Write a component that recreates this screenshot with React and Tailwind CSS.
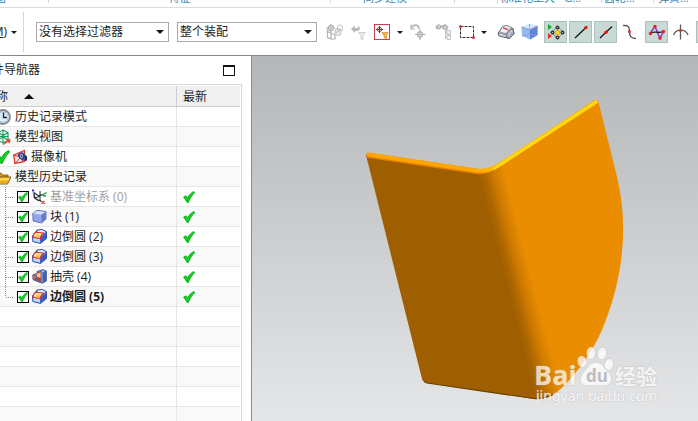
import clsx from 'clsx';

const FONT = 'font-["Open_Sans","Noto_Sans_CJK_SC",sans-serif]';

const RIBBON_GROUPS = [
  { label: '视图', className: 'w-[49px] border-r pr-[42px] justify-end' },
  { label: '特征', className: 'w-[282px] border-r pr-5 justify-center' },
  { label: '同步建模', className: 'w-[124px] border-r pl-8' },
  { label: '', className: 'w-[43px] border-r' },
  { label: '标准化工具 - G...', className: 'w-[104px] border-r pl-[2px]' },
  { label: '齿轮...', className: 'w-[52px] border-r pl-[2px]' },
  { label: '弹簧...', className: 'flex-1 pl-1' },
];

const TREE_ROWS = [
  { label: '历史记录模式', icon: ClockIcon, kind: 'root' },
  { label: '模型视图', icon: ViewsIcon, kind: 'root' },
  { label: '摄像机', icon: CameraIcon, kind: 'camera' },
  { label: '模型历史记录', icon: FolderIcon, kind: 'root' },
  { label: '基准坐标系 (0)', icon: CsysIcon, kind: 'feature', textClass: 'text-[#a0a0a0]' },
  { label: '块 (1)', icon: BlockIcon, kind: 'feature' },
  { label: '边倒圆 (2)', icon: BlendIcon, kind: 'feature' },
  { label: '边倒圆 (3)', icon: BlendIcon, kind: 'feature' },
  { label: '抽壳 (4)', icon: ShellIcon, kind: 'feature' },
  { label: '边倒圆 (5)', icon: BlendIcon, kind: 'feature', textClass: 'font-bold', last: true },
];

const EMPTY_ROWS = [0, 1, 2, 3, 4, 5];

/* ---------- tree icons ---------- */

function CheckMark({ className }) {
  return (
    <svg viewBox="0 0 12 12" className={className} aria-hidden="true">
      <path d="M.5 6.200 2.700 4.700l1.900 2C6 4.200 8 1.800 10.800.5l.9 1.300C8.900 4.300 6.800 7.700 5.500 11.400H4C3.100 9.400 2 7.800.5 6.200Z" fill="#14cc1e" stroke="#0ba81b" strokeWidth=".8" />
    </svg>
  );
}

function ClockIcon() {
  return (
    <svg viewBox="0 0 16 16" className="size-4 shrink-0" aria-hidden="true">
      <circle cx="8" cy="8" r="7" fill="#d3e4f0" stroke="#858b92" strokeWidth="1.800" />
      <circle cx="8" cy="8" r="5.200" fill="#dcecf8" stroke="#aab8c4" strokeWidth=".8" />
      <path d="M8.500 3.500V8.500H12" fill="none" stroke="#1d2630" strokeWidth="1.300" />
    </svg>
  );
}

function ViewsIcon() {
  return (
    <svg viewBox="0 0 16 16" className="size-4 shrink-0" aria-hidden="true">
      <path d="M8 1 13 3.500v8l-5 2.500-5-2.500V3.500ZM3 3.500l5 3 5-3M8 1v13M3 11.500l5-4 5 4M3 7.500h10" fill="none" stroke="#12a05a" strokeWidth="1.100" />
      <path d="M8 15.500 14.500 11M15 10.500l-3.500.5M15 10.500l-1 3.500" fill="none" stroke="#f04a28" strokeWidth="1.500" />
    </svg>
  );
}

function CameraIcon() {
  return (
    <svg viewBox="0 0 16 16" className="size-4 shrink-0" aria-hidden="true">
      <path d="M.7 6 11.500 1.500V12.500L2 14.500Z" fill="#fbe9e4" stroke="#d8362a" strokeWidth="1.300" />
      <path d="M.7 6 7 8M2 14.500 7 9" stroke="#d8362a" strokeWidth="1" />
      <path d="m4.500 5 5-2 4 4v4l-4 1-4-4Z" fill="#4650a0" />
      <circle cx="8.500" cy="7" r="2.400" fill="#d4dcf4" stroke="#1c2250" />
      <circle cx="8.500" cy="7" r="1" fill="#232a60" />
      <path d="m12 6 2 1.500v4L12 12" fill="#222a50" />
    </svg>
  );
}

function FolderIcon() {
  return (
    <svg viewBox="0 0 16 16" className="size-4 shrink-0" aria-hidden="true">
      <path d="M1 4h5l1.500 2H13v8H1Z" fill="#d99a18" stroke="#7a5004" strokeWidth=".8" />
      <path d="M5 8h11L12.500 15H1.500Z" fill="#ffd84a" stroke="#6f4a04" strokeWidth=".9" />
      <path d="M3 14.500h9.300L14 11.500H6Z" fill="#eda41e" />
    </svg>
  );
}

function CsysIcon() {
  return (
    <svg viewBox="0 0 15 15" className="size-[15px] shrink-0" aria-hidden="true">
      <path d="M2 3.500 3 9.500 9.500 12.500M3 9.500 10 5.500M2 3.500 8 8M8 2v10.500M2 3.500V8L6 11.500H9" fill="none" stroke="#30343a" strokeWidth="1.100" />
      <path d="M1 0v3.500M0 1.500h2.200" stroke="#2030e0" strokeWidth="1" />
      <path d="M9.500 6.500 14.500 3.500M11 6.500l3 .5" stroke="#159a3c" strokeWidth="1.300" />
      <path d="m9 12 4 3M12.500 12 9.500 14.500" stroke="#d02a2a" strokeWidth="1.100" />
    </svg>
  );
}

function BlockIcon() {
  return (
    <svg viewBox="0 0 15 15" className="size-[15px] shrink-0" aria-hidden="true">
      <path d="M.7 4.500 5 1.300 14 2.500V10L9.500 14 1.200 12Z" fill="#92a6ee" stroke="#5566b8" strokeWidth=".9" />
      <path d="M1 4.600 5.200 1.700 13.500 2.900 9.500 5.800Z" fill="#d3dcfc" />
      <path d="M9.500 5.800 13.600 3v6.800L9.500 13.500Z" fill="#6478cc" />
    </svg>
  );
}

function BlendIcon() {
  return (
    <svg viewBox="0 0 15 15" className="size-[15px] shrink-0" aria-hidden="true">
      <path d="M.5 7 5 1 10 .5 14.500 2.500V9.500L8.500 14.500.8 12.500Z" fill="#4d7de0" stroke="#2c3f9c" strokeWidth=".9" />
      <path d="M1.200 8.500 8 9.800V13.800L1.200 12Z" fill="#b4dcff" />
      <path d="M8.500 9 14 4.500v5L8.500 14Z" fill="#3659c2" />
      <path d="M6 1.500 10 1.100 13.600 2.700 12 4 5 3Z" fill="#e4eeff" />
      <path d="M1 8.400C1.200 5.700 2.500 3.700 4.500 3.200L12.200 4.300C9.700 5.200 8.600 6.800 8.300 9.700Z" fill="#ffc268" stroke="#e0301e" strokeWidth="1.100" />
      <path d="M2.500 7.200C3 5.800 4 4.800 5 4.600L9 5.200" fill="none" stroke="#fff3b8" strokeWidth="1.300" />
    </svg>
  );
}

function ShellIcon() {
  return (
    <svg viewBox="0 0 15 15" className="size-[15px] shrink-0" aria-hidden="true">
      <path d="M5 2.500 11 .7 14.300 2v10L10 14.300 8 13Z" fill="#8cb4f4" stroke="#2d438f" strokeWidth=".9" />
      <path d="M10.500 3.500 14 2v9.800l-3.500 2Z" fill="#3c62b8" />
      <path d="M.8 6 9 2.500V13.500L1 10.500Z" fill="#e8763a" stroke="#5a4668" strokeWidth=".9" />
      <path d="M5 4.800 8.500 3.500V8.500L5 8Z" fill="#ffc890" />
      <path d="m1.500 10 3-2L8.500 9v4Z" fill="#b8441c" />
      <path d="M.8 6 4.500 7v3.500M1 10.500 9 13.800" fill="none" stroke="#4668b8" strokeWidth="1.200" />
    </svg>
  );
}

/* ---------- toolbar icons ---------- */

function Caret({ className }) {
  return (
    <svg viewBox="0 0 8 4" className={className} aria-hidden="true">
      <path d="M0 0H8L4 4Z" fill="#1a1a1a" />
    </svg>
  );
}

function ToolSvg({ children }) {
  return (
    <svg viewBox="0 0 24 24" className="size-6 shrink-0" fill="none" aria-hidden="true">
      {children}
    </svg>
  );
}

function AssemblyFilterIcon() {
  return (
    <ToolSvg>
      <g stroke="#b4b4b4" strokeWidth="1.200">
        <path d="M5.500 9v8.500l3.500 1.500V13L5.500 11.500M9 14h4v5H9M4 8h9M9 4v9" />
        <circle cx="9" cy="8" r="2.600" />
        <ellipse cx="16" cy="12" rx="3" ry="3.500" fill="#e9e9e9" stroke="#cacaca" />
        <ellipse cx="18" cy="8" rx="2.500" ry="3" stroke="#cacaca" />
        <path d="m14 13 4-4" stroke="#cacaca" />
      </g>
    </ToolSvg>
  );
}

function ResetFilterIcon() {
  return (
    <ToolSvg>
      <path d="m5 9 4-3.500V8h2c1.800 0 1.800-1 .8-2.500C15 7 14.500 11 11 11H9v2Z" fill="#b9b9b9" />
      <path d="M12.500 12.500h7L17 15.500V20l-2-1v-3.500Z" fill="#efefef" stroke="#cfcfcf" />
    </ToolSvg>
  );
}

function SelectFilterIcon() {
  return (
    <ToolSvg>
      <rect x="4.500" y="4.500" width="15" height="15" fill="#fffdfd" stroke="#c9404c" />
      <circle cx="9.500" cy="9.500" r="2.200" stroke="#8b5558" />
      <path d="M6 9.500h7M9.500 6v7" stroke="#6b3b40" />
      <path d="M12 12.500h6L16.500 15.500v3L14 17.500V15.500Z" fill="#f3b34a" stroke="#dc9430" strokeWidth=".8" />
    </ToolSvg>
  );
}

function RotatePointIcon() {
  return (
    <ToolSvg>
      <path d="M5.500 8C7.500 4 13 4 13 9" stroke="#b4b4b4" strokeWidth="1.600" />
      <path d="M5 4.500V9H9" stroke="#b4b4b4" strokeWidth="1.200" />
      <circle cx="14" cy="14.500" r="2.700" stroke="#b4b4b4" strokeWidth="1.200" />
      <path d="M9 14.500h10.500M14 9.500v10.500" stroke="#acacac" strokeWidth="1.200" />
    </ToolSvg>
  );
}

function FindInTreeIcon() {
  return (
    <ToolSvg>
      <path d="m5.500 6 3-2 3 1.500 4-1.500 3 3-1.500 3.500-3.500-1-1.500-1.500-2.500 1.500L6 9Z" fill="#b9b9b9" />
      <path d="m8 7 2-1M14 8l2-1" stroke="#f1f1f1" />
      <path d="M15.500 10v9M15.500 13H17M15.500 18H17" stroke="#bdbdbd" />
      <path d="M17 10.500h3.500v4H17ZM17 15.500h3.500v4H17Z" fill="#f3f3f3" stroke="#c4c4c4" />
    </ToolSvg>
  );
}

function RectSelectIcon() {
  return (
    <ToolSvg>
      <path d="M6.500 6.500h13v11h-13Z" stroke="#333" strokeDasharray="3 1" />
      <circle cx="6.500" cy="6.500" r="1.500" fill="#d43440" />
      <circle cx="19.500" cy="17.500" r="1.500" fill="#d43440" />
    </ToolSvg>
  );
}

function RoundedSolidIcon() {
  return (
    <ToolSvg>
      <path d="M4 13.500 8.500 6.500 13 5.500l6 3 1 5.500L15.500 18.500 5 16Z" fill="#ccd0da" stroke="#5c616e" strokeWidth="1" />
      <path d="M4 13.500c2-1 4 0 9 1.500L19.500 9.500" stroke="#747a88" />
      <path d="M12.500 17.500C12.500 12 15 9 19 8.500L20 14l-4.500 4.500Z" fill="#a4aab8" stroke="#5c616e" strokeWidth=".8" />
      <path d="M14.500 16C15 13 16.500 11.500 18.500 11" stroke="#e4e7ee" />
      <path d="m8.500 6.500 4.500-1 5 2.500C15 9 13.500 11 12.500 13.500L5.500 12Z" fill="#eceef3" stroke="#747a88" strokeWidth=".6" />
      <path d="m9 8 5 1.500" stroke="#df4a4a" strokeWidth="1.600" />
    </ToolSvg>
  );
}

function TranslucentCubeIcon() {
  return (
    <ToolSvg>
      <path d="m3.500 7 8-3 8 2V15L12 19.500l-8-3.500Z" fill="#8fbcf2" />
      <path d="m3.500 7 8-3 8 2L12 9.500Z" fill="#d6e8fc" />
      <path d="m12 9.500 7.500-3.500v9L12 19.500Z" fill="#5a86dc" />
      <path d="M11.500 4v10.500M4 16l7.500-1.500 8 .5M3.500 7l8.500 2.500 7.500-3.500" stroke="#b48cc4" strokeWidth=".8" />
    </ToolSvg>
  );
}

function SnapPointsIcon() {
  return (
    <ToolSvg>
      <path d="M4 4v6l4-3Z" fill="#14ac2c" />
      <path d="M4 13v6l4-3Z" fill="#f02c28" />
      <circle cx="13.500" cy="12.500" r="4.500" stroke="#858585" />
      <g fill="#30332e" stroke="#161616">
        <circle cx="13.500" cy="7.500" r="1.500" />
        <circle cx="13.500" cy="17.500" r="1.500" />
        <circle cx="8.500" cy="12.500" r="1.500" />
        <circle cx="18.500" cy="12.500" r="1.500" />
      </g>
      <circle cx="13.500" cy="12.500" r="2.200" fill="#ffe02a" stroke="#dba700" />
      <g fill="#b9b48a">
        <circle cx="13.500" cy="7.500" r=".8" />
        <circle cx="13.500" cy="17.500" r=".8" />
        <circle cx="8.500" cy="12.500" r=".8" />
        <circle cx="18.500" cy="12.500" r=".8" />
      </g>
    </ToolSvg>
  );
}

function EndPointIcon() {
  return (
    <ToolSvg>
      <path d="M6 18 17 7.500" stroke="#1b1b1b" strokeWidth="1.400" />
      <circle cx="17" cy="7.500" r="1.700" fill="#e81c1c" />
    </ToolSvg>
  );
}

function MidPointIcon() {
  return (
    <ToolSvg>
      <path d="M6 18 18 6.500" stroke="#1b1b1b" strokeWidth="1.400" />
      <circle cx="12" cy="12.300" r="1.700" fill="#e81c1c" />
    </ToolSvg>
  );
}

function ControlPointIcon() {
  return (
    <ToolSvg>
      <path d="M4 5.500C9.500 5 10.500 7 10.500 11.500S11.500 18.500 17 18.500" stroke="#555" strokeWidth="1.400" />
      <circle cx="10.500" cy="11.500" r="1.500" fill="#d83030" />
    </ToolSvg>
  );
}

function PoleIcon() {
  return (
    <ToolSvg>
      <path d="m5 13.500 5-7 5 12 3.500-7" stroke="#8c35c9" strokeWidth="1.500" />
      <path d="M5 13.500C9 10 12 14 18.500 11.500" stroke="#1c1c1c" strokeWidth="1.300" />
      <g fill="#e8202c">
        <circle cx="5.500" cy="13.500" r="1.700" />
        <circle cx="10" cy="6.500" r="1.700" />
        <circle cx="15" cy="18" r="1.700" />
        <circle cx="18.500" cy="11.500" r="1.700" />
      </g>
    </ToolSvg>
  );
}

function IntersectionIcon() {
  return (
    <ToolSvg>
      <path d="M10.500 4.500v15M3.500 15C6 8.500 15.500 8.500 18 15" stroke="#5b5b5b" strokeWidth="1.300" />
      <circle cx="10.500" cy="10.500" r="1.500" fill="#d83030" />
    </ToolSvg>
  );
}

/* ---------- toolbar ---------- */

function ToolButton({ label, icon: Icon, pressed }) {
  return (
    <button
      type="button"
      aria-label={label}
      aria-pressed={pressed ? true : undefined}
      className={clsx(
        'flex shrink-0 items-center justify-center',
        pressed ? 'h-[22px] w-[23px] border border-[#a9c2be] bg-[#c8d9d6]' : 'size-6',
      )}
    >
      {Icon && <Icon />}
    </button>
  );
}

function CaretButton({ label }) {
  return (
    <button type="button" aria-label={label} className="flex h-6 w-3 shrink-0 items-center justify-center">
      <Caret className="h-[3px] w-[6px]" />
    </button>
  );
}

function FilterSelect({ label, value, className }) {
  return (
    <div className={clsx('relative shrink-0', className)}>
      <select
        aria-label={label}
        defaultValue={value}
        className="block h-5 w-full appearance-none border border-[#aaaaaa] bg-white pl-[2px] text-[12px] leading-[18px] text-[#1c1c1c]"
      >
        <option>{value}</option>
      </select>
      <Caret className="pointer-events-none absolute top-2 right-[5px] h-1 w-2" />
    </div>
  );
}

function RibbonLabels() {
  return (
    <div className="flex h-2 shrink-0 overflow-hidden border-b border-[#d9dbdc] text-[11px] leading-[10px] text-[#2f86b5]">
      {RIBBON_GROUPS.map((group, i) => (
        <div
          key={i}
          className={clsx('flex h-[3px] shrink-0 items-end border-[#d4d4d4] whitespace-nowrap', group.className)}
        >
          {group.label}
        </div>
      ))}
    </div>
  );
}

function Toolbar() {
  return (
    <div className="flex h-12 shrink-0 items-center overflow-hidden border-b border-[#7e8688] bg-white pt-px">
      <button type="button" className="flex h-10 w-6 shrink-0 items-center justify-end gap-1 border-r border-[#d5d5d5] pr-[6px] text-[12px] text-[#222] whitespace-nowrap">
        <span>菜单(<u>M</u>)</span>
        <Caret className="h-[3px] w-[6px] shrink-0" />
      </button>
      <FilterSelect label="类型过滤器" value="没有选择过滤器" className="ml-3 w-[133px]" />
      <FilterSelect label="选择范围" value="整个装配" className="ml-2 mr-[5px] w-[140px]" />
      <ToolButton label="装配过滤器" icon={AssemblyFilterIcon} />
      <ToolButton label="重置过滤器" icon={ResetFilterIcon} />
      <ToolButton label="常规选择过滤器" icon={SelectFilterIcon} />
      <CaretButton label="过滤器选项" />
      <ToolButton label="旋转点" icon={RotatePointIcon} />
      <ToolButton label="在导航器中查找" icon={FindInTreeIcon} />
      <ToolButton label="矩形选择" icon={RectSelectIcon} />
      <CaretButton label="选择方式" />
      <div className="ml-1 flex shrink-0">
        <ToolButton label="着色" icon={RoundedSolidIcon} />
        <ToolButton label="透明" icon={TranslucentCubeIcon} />
      </div>
      <div className="ml-[2px] flex shrink-0 items-center gap-[2px]">
        <ToolButton label="启用捕捉点" icon={SnapPointsIcon} pressed />
        <ToolButton label="端点" icon={EndPointIcon} pressed />
        <ToolButton label="中点" icon={MidPointIcon} pressed />
        <ToolButton label="控制点" icon={ControlPointIcon} />
        <ToolButton label="极点" icon={PoleIcon} pressed />
        <ToolButton label="交点" icon={IntersectionIcon} />
        <ToolButton label="圆弧中心" pressed />
      </div>
    </div>
  );
}

/* ---------- part navigator ---------- */

function TreeName({ row }) {
  const Icon = row.icon;

  if (row.kind === 'feature') {
    return (
      <label className={clsx('flex h-[19px] items-center gap-[3px] whitespace-nowrap', row.textClass)}>
        <svg viewBox="0 0 14 20" className="h-5 w-[14px] shrink-0" fill="none" stroke="#8c8c8c" strokeDasharray="1 1" aria-hidden="true">
          <path d={row.last ? 'M5.500 0V10' : 'M5.500 0V20'} />
          <path d="M6 10.500H14" />
        </svg>
        <span className="relative size-3 shrink-0">
          <input type="checkbox" defaultChecked className="peer block size-3 appearance-none border border-black bg-white" />
          <CheckMark className="pointer-events-none absolute inset-px hidden size-[10px] peer-checked:block" />
        </span>
        <Icon />
        <span>{row.label}</span>
      </label>
    );
  }

  return (
    <div className={clsx('-ml-[5px] flex h-[19px] items-center whitespace-nowrap', row.kind === 'camera' ? 'gap-[2px]' : 'gap-1')}>
      {row.kind === 'camera' && <CheckMark className="size-4 shrink-0 p-px" />}
      <Icon />
      <span>{row.label}</span>
    </div>
  );
}

function PartNavigator() {
  return (
    <aside className="flex w-[252px] shrink-0 flex-col overflow-hidden border-r border-[#858b8e] bg-white pr-[9px]">
      <header className="flex h-7 shrink-0 items-center justify-between pr-[7px]">
        <h2 className="flex w-10 justify-end text-[12px] whitespace-nowrap">部件导航器</h2>
        <button type="button" aria-label="最大化" className="h-[11px] w-3 border border-t-2 border-[#111]" />
      </header>
      <div className="min-h-0 flex-1 overflow-hidden border-t border-r border-[#d8d8d8] pt-px pr-px">
        <table className="w-full table-fixed border-separate border-spacing-0 text-[12px] leading-[19px]">
          <thead>
            <tr className="bg-[#f0f0f0]">
              <th className="h-[21px] w-[177px] border-r border-b border-[#cdcdcd] p-0 font-normal">
                <div className="flex items-center">
                  <span className="flex w-2 justify-end whitespace-nowrap">名称</span>
                  <svg viewBox="0 0 10 5" className="ml-4 h-[5px] w-[10px]" aria-hidden="true">
                    <path d="M5 0 10 5H0Z" fill="#111" />
                  </svg>
                </div>
              </th>
              <th className="border-b border-[#cdcdcd] p-0 pl-[6px] text-left font-normal">最新</th>
            </tr>
          </thead>
          <tbody>
            {TREE_ROWS.map(row => (
              <tr key={row.label} className="even:bg-[#f9f9f9]">
                <td className="h-5 border-r border-b border-[#e6e6e6] p-0">
                  <TreeName row={row} />
                </td>
                <td className="border-b border-[#e6e6e6] p-0 pl-[6px]">
                  {row.kind === 'feature' && <CheckMark className="size-3" />}
                </td>
              </tr>
            ))}
            {EMPTY_ROWS.map(n => (
              <tr key={n} className="even:bg-[#f9f9f9]">
                <td className="h-5 border-r border-b border-[#e6e6e6] p-0" />
                <td className="border-b border-[#e6e6e6] p-0" />
              </tr>
            ))}
          </tbody>
        </table>
      </div>
    </aside>
  );
}

/* ---------- graphics window ---------- */

function Watermark() {
  return (
    <g fill="#fff" fillOpacity=".74" stroke="#a8aaac" strokeOpacity=".4" strokeWidth="1" paintOrder="stroke">
      <text x="534" y="385" fontSize="27" fontWeight="700" fontFamily="Open Sans, sans-serif">Bai</text>
      <ellipse cx="582" cy="361.500" rx="4.300" ry="5.600" transform="rotate(-12 582 361.500)" />
      <ellipse cx="591" cy="353" rx="4.300" ry="6" />
      <ellipse cx="602" cy="353.500" rx="4.300" ry="6" transform="rotate(10 602 353.500)" />
      <ellipse cx="609" cy="364.500" rx="4.300" ry="5.600" transform="rotate(14 609 364.500)" />
      <path d="M596 362.500C602 362.500 604 368 608 372C613 377 612 385.500 604 385.500H587C579 385.500 579 377 584 372C588 368 590 362.500 596 362.500Z" />
      <text x="586" y="382" fontSize="17" fontWeight="700" fontFamily="Open Sans, sans-serif" fill="#bcbec0" fillOpacity="1" stroke="none">du</text>
      <text x="615" y="384" fontSize="21" fontWeight="700" fontFamily="Noto Sans CJK SC, sans-serif">经验</text>
      <text x="536" y="401" fontSize="14" fontFamily="Noto Sans, sans-serif" fillOpacity=".85">jingyan.baidu.com</text>
    </g>
  );
}

function GraphicsWindow() {
  return (
    <main className="min-w-0 flex-1 bg-linear-to-b from-[#b5b6b8] to-[#e5e6e8]">
      <svg viewBox="252 56 446 365" className="h-full w-full" role="img" aria-label="边倒圆 (5)">
        <defs>
          <linearGradient id="bend" gradientUnits="userSpaceOnUse" x1="478" y1="175" x2="504" y2="168.300">
            <stop offset="0" stopColor="#9f5f00" />
            <stop offset=".25" stopColor="#ae6700" />
            <stop offset=".6" stopColor="#d07c00" />
            <stop offset="1" stopColor="#ea8d00" />
          </linearGradient>
          <linearGradient id="rim" gradientUnits="userSpaceOnUse" x1="470" y1="0" x2="510" y2="0">
            <stop offset="0" stopColor="#ffa600" />
            <stop offset="1" stopColor="#ffc808" />
          </linearGradient>
        </defs>
        <path
          d="M366 155Q366 152 370 153L478 169Q488 170 497 165L593 101Q598 98 599 104L617 177C628 222 625 275 602 330C591 355 573 379 555 394Q546 400 534 399L427 383Q423 382 422 379Z"
          fill="url(#bend)"
        />
        <path d="M424 381.500 427 383 534 398.500Q546 399 555 393.500" fill="none" stroke="#6b4100" strokeWidth="1.200" />
        <path d="M368.500 156.500 476 172.500Q488 174 500 166" fill="none" stroke="#e27f00" strokeWidth="3" strokeLinecap="round" />
        <path d="M368.500 154.500 476 170.500Q488 172 499 165L596 102" fill="none" stroke="url(#rim)" strokeWidth="4" strokeLinecap="round" />
        <path d="M494 169 596 102" fill="none" stroke="#ffdc14" strokeWidth="2" strokeLinecap="round" />
        <Watermark />
      </svg>
    </main>
  );
}

export default function App() {
  return (
    <div className={clsx('flex h-screen w-full flex-col overflow-hidden bg-white text-[#1c1c1c]', FONT)}>
      <RibbonLabels />
      <Toolbar />
      <div className="flex min-h-0 flex-1">
        <PartNavigator />
        <GraphicsWindow />
      </div>
    </div>
  );
}
